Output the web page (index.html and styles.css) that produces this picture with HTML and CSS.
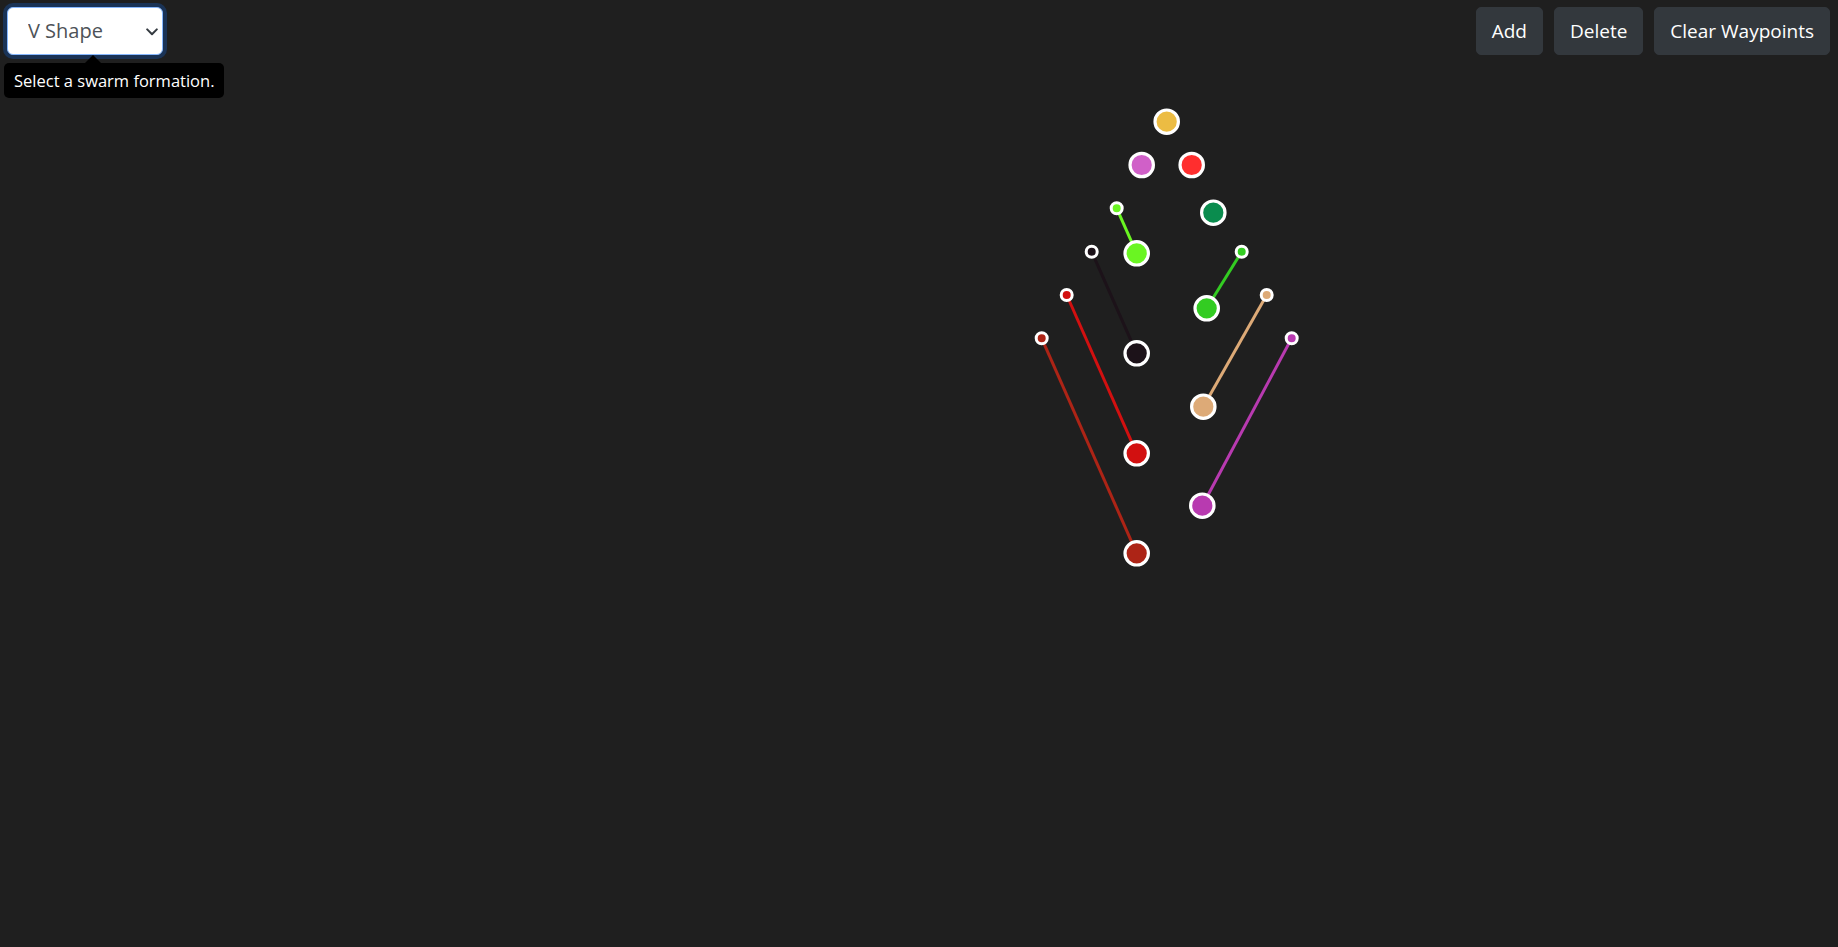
FILE: index.html
```html
<!DOCTYPE html>
<html lang="en">
<head>
<meta charset="utf-8">
<title>Swarm</title>
<link rel="stylesheet" href="styles.css">
</head>
<body>
<svg class="canvas" width="1838" height="947" viewBox="0 0 1838 947" xmlns="http://www.w3.org/2000/svg">
  <g class="paths">
    <line x1="1116.7" y1="208.3" x2="1136.7" y2="253.3" stroke="#6af522"/>
    <line x1="1091.7" y1="251.7" x2="1136.7" y2="353.3" stroke="#1c1219"/>
    <line x1="1066.7" y1="295" x2="1136.7" y2="453.3" stroke="#d21010"/>
    <line x1="1041.7" y1="338.3" x2="1136.7" y2="553.3" stroke="#ad2416"/>
    <line x1="1241.7" y1="251.7" x2="1206.7" y2="308.3" stroke="#33cc22"/>
    <line x1="1266.7" y1="295" x2="1203.3" y2="406.7" stroke="#ddaa77"/>
    <line x1="1291.7" y1="338.3" x2="1202.3" y2="505.7" stroke="#b83ab0"/>
  </g>
  <g class="waypoints">
    <circle cx="1116.7" cy="208.3" r="5.5" fill="#6af522"/>
    <circle cx="1091.7" cy="251.7" r="5.5" fill="#1c1219"/>
    <circle cx="1066.7" cy="295" r="5.5" fill="#d21010"/>
    <circle cx="1041.7" cy="338.3" r="5.5" fill="#ad2416"/>
    <circle cx="1241.7" cy="251.7" r="5.5" fill="#33cc22"/>
    <circle cx="1266.7" cy="295" r="5.5" fill="#ddaa77"/>
    <circle cx="1291.7" cy="338.3" r="5.5" fill="#b83ab0"/>
  </g>
  <g class="drones">
    <circle cx="1166.7" cy="121.7" r="11.7" fill="#ecbc43"/>
    <circle cx="1141.7" cy="165" r="11.7" fill="#d060c8"/>
    <circle cx="1191.7" cy="165" r="11.7" fill="#ff2e2e"/>
    <circle cx="1213.3" cy="212.7" r="11.7" fill="#0a8c4e"/>
    <circle cx="1136.7" cy="253.3" r="11.7" fill="#6af522"/>
    <circle cx="1206.7" cy="308.3" r="11.7" fill="#33cc22"/>
    <circle cx="1136.7" cy="353.3" r="11.7" fill="#1c1219"/>
    <circle cx="1203.3" cy="406.7" r="11.7" fill="#ddaa77"/>
    <circle cx="1136.7" cy="453.3" r="11.7" fill="#d21010"/>
    <circle cx="1202.3" cy="505.7" r="11.7" fill="#b83ab0"/>
    <circle cx="1136.7" cy="553.3" r="11.7" fill="#ad2416"/>
  </g>
</svg>

<header class="toolbar">
  <div class="select-wrap">
    <select class="formation">
      <option>V Shape</option>
      <option>Line</option>
      <option>Circle</option>
      <option>Grid</option>
    </select>
    <svg class="chevron" width="12" height="8" viewBox="0 0 12 8" xmlns="http://www.w3.org/2000/svg">
      <path d="M1.2 1.4 L6 6.2 L10.8 1.4" fill="none" stroke="#343a40" stroke-width="2" stroke-linecap="round" stroke-linejoin="round"/>
    </svg>
    <div class="tooltip">
      <div class="tooltip-arrow"></div>
      <div class="tooltip-inner">Select a swarm formation.</div>
    </div>
  </div>
  <div class="actions">
    <button class="btn">Add</button>
    <button class="btn">Delete</button>
    <button class="btn">Clear Waypoints</button>
  </div>
</header>
</body>
</html>
```

FILE: styles.css
```css
html, body {
  margin: 0;
  padding: 0;
  width: 100%;
  height: 100%;
  overflow: hidden;
  background: #1f1f1f;
  font-family: "Open Sans", "Noto Sans", "Liberation Sans", sans-serif;
}

.canvas {
  position: absolute;
  left: 0;
  top: 0;
}

.paths line {
  stroke-width: 3;
}

.waypoints circle {
  stroke: #ffffff;
  stroke-width: 3;
}

.drones circle {
  stroke: #ffffff;
  stroke-width: 3.2;
}

.toolbar {
  position: relative;
  display: flex;
  justify-content: space-between;
  align-items: flex-start;
  padding: 7px 8px 0 7px;
}

.select-wrap {
  position: relative;
  width: 156px;
}

.formation {
  appearance: none;
  -webkit-appearance: none;
  box-sizing: border-box;
  width: 156px;
  height: 47.5px;
  margin: 0;
  padding: 0 30px 0 20px;
  font-family: inherit;
  font-size: 20px;
  color: #4d5257;
  background: #ffffff;
  border: 1.25px solid #86b7fe;
  border-radius: 6px;
  box-shadow: 0 0 0 4px rgba(13, 110, 253, 0.25);
  outline: none;
}

.chevron {
  position: absolute;
  left: 139px;
  top: 21px;
  pointer-events: none;
}

.tooltip {
  position: absolute;
  left: -3px;
  top: 48px;
  padding-top: 8px;
}

.tooltip-arrow {
  position: absolute;
  top: 0;
  left: 81px;
  width: 0;
  height: 0;
  border-left: 8px solid transparent;
  border-right: 8px solid transparent;
  border-bottom: 8px solid #000000;
}

.tooltip-inner {
  background: #000000;
  color: #ffffff;
  font-size: 16.5px;
  line-height: 25px;
  padding: 5px 10px;
  border-radius: 5px;
  white-space: nowrap;
}

.actions {
  display: flex;
  gap: 11px;
}

.btn {
  box-sizing: border-box;
  height: 47.5px;
  margin: 0;
  padding: 0 15px;
  font-family: inherit;
  font-size: 19px;
  color: #ffffff;
  background: #33383d;
  border: 1.25px solid #33383d;
  border-radius: 5px;
}
```
